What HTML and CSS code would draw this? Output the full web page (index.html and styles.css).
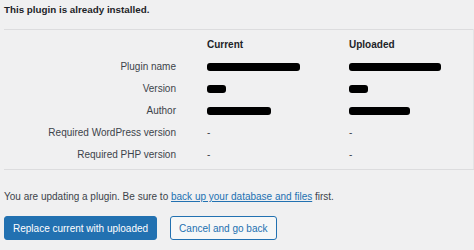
FILE: index.html
```
<!DOCTYPE html>
<html>
<head>
    <title>Plugin upload</title>
    <link rel="stylesheet" href="styles.css">
</head>
<body>
    <h2 class="title">This plugin is already installed.</h2>
    <table class="compare">
        <tr>
            <th class="label"></th>
            <th class="col">Current</th>
            <th class="col">Uploaded</th>
        </tr>
        <tr>
            <td class="label">Plugin name</td>
            <td><span class="redact" style="width: 93px"></span></td>
            <td><span class="redact" style="width: 92px"></span></td>
        </tr>
        <tr>
            <td class="label">Version</td>
            <td><span class="redact" style="width: 19px"></span></td>
            <td><span class="redact" style="width: 19px"></span></td>
        </tr>
        <tr>
            <td class="label">Author</td>
            <td><span class="redact" style="width: 64px"></span></td>
            <td><span class="redact" style="width: 61px"></span></td>
        </tr>
        <tr>
            <td class="label">Required WordPress version</td>
            <td class="dash">-</td>
            <td class="dash">-</td>
        </tr>
        <tr class="last">
            <td class="label">Required PHP version</td>
            <td class="dash">-</td>
            <td class="dash">-</td>
        </tr>
    </table>
    <p class="notice">You are updating a plugin. Be sure to <a href="#">back up your database and files</a> first.</p>
    <div class="actions">
        <button class="button primary">Replace current with uploaded</button>
        <button class="button secondary">Cancel and go back</button>
    </div>
</body>
</html>
```

FILE: styles.css
```
body {
    margin: 0;
    padding: 0 0 0 4px;
    background-color: #f0f0f1;
    color: #3c434a;
    font-family: "Liberation Sans", Arial, sans-serif;
    font-size: 10px;
    overflow: hidden;
}

.title {
    margin: 0;
    padding-top: 4px;
    height: 25px;
    font-size: 9.8px;
    line-height: 12px;
    font-weight: bold;
    color: #1d2327;
}

.compare {
    width: 470px;
    font-size: 10px;
    border-collapse: collapse;
    border-top: 1px solid #dcdcde;
    border-bottom: 1px solid #dcdcde;
    border-right: 1px solid #e4e4e6;
}

.compare th,
.compare td {
    height: 22px;
    padding: 0;
    text-align: left;
    vertical-align: middle;
}

.compare tr:first-child th {
    padding-top: 3px;
}

.compare tr.last td {
    padding-bottom: 4px;
}

.compare th.col {
    font-weight: bold;
    color: #1d2327;
}

.compare .label {
    width: 172px;
    padding-right: 31px;
    text-align: right;
    color: #3c434a;
}

.compare td:nth-child(2),
.compare th:nth-child(2) {
    width: 142px;
}

.redact {
    display: inline-block;
    height: 8px;
    background-color: #000;
    border-radius: 3px;
    vertical-align: middle;
}

.dash {
    padding-left: 3px;
}

.notice {
    margin: 20px 0 0 0;
    height: 18px;
    line-height: 14px;
}

.notice a {
    color: #2271b1;
}

.actions {
    display: flex;
    gap: 13px;
    margin-top: 8px;
}

.button {
    height: 24px;
    padding: 0 8px;
    border-radius: 3px;
    font-family: "Liberation Sans", Arial, sans-serif;
    font-size: 10px;
    cursor: pointer;
}

.primary {
    background-color: #2271b1;
    border: 1px solid #2271b1;
    color: #fff;
}

.secondary {
    background-color: #f6f7f7;
    border: 1px solid #2271b1;
    color: #2271b1;
}
```
